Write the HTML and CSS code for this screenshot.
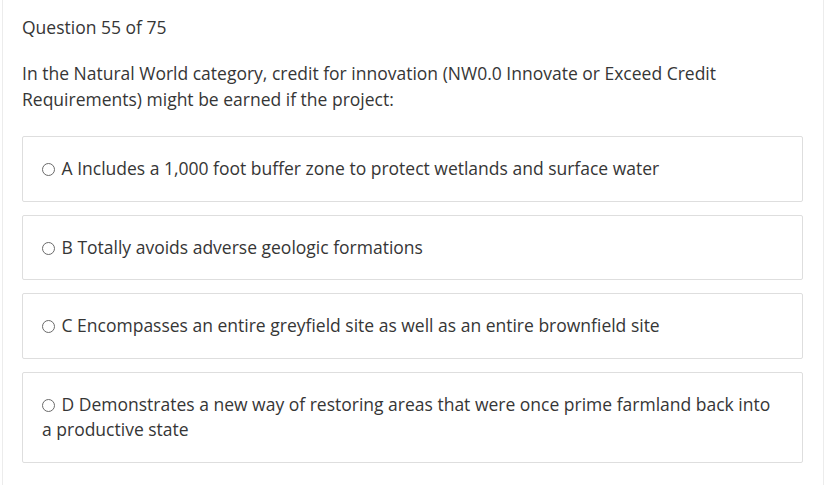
FILE: index.html
```html
<!DOCTYPE html>
<html>
<head>
<meta charset="utf-8">
<link rel="stylesheet" href="styles.css">
</head>
<body>
<div class="panel">
  <div class="qnum">Question 55 of 75</div>
  <p class="qtext">In the Natural World category, credit for innovation (NW0.0 Innovate or Exceed Credit Requirements) might be earned if the project:</p>
  <div class="options">
    <label class="option"><span class="radio"></span> A Includes a 1,000 foot buffer zone to protect wetlands and surface water</label>
    <label class="option"><span class="radio"></span> B Totally avoids adverse geologic formations</label>
    <label class="option"><span class="radio"></span> C Encompasses an entire greyfield site as well as an entire brownfield site</label>
    <label class="option"><span class="radio"></span> D Demonstrates a new way of restoring areas that were once prime farmland back into a productive state</label>
  </div>
</div>
</body>
</html>
```
FILE: styles.css
```css
html, body {
  margin: 0;
  padding: 0;
  background: #fff;
}
body {
  font-family: "Open Sans", "Liberation Sans", sans-serif;
  color: #363636;
  font-size: 17.5px;
  line-height: 1.5;
}
.panel {
  margin-left: 2px;
  width: 822px;
  border-left: 1px solid #ececec;
  border-right: 1px solid #ececec;
  padding: 14px 20px 40px 19px;
  box-sizing: border-box;
}
.qnum {
  line-height: 26px;
}
.qtext {
  margin: 20px 0 24px;
  line-height: 26px;
}
.options {
  display: flex;
  flex-direction: column;
  gap: 13px;
}
.option {
  display: block;
  border: 1px solid #dedede;
  border-radius: 2px;
  padding: 19px 19px;
  line-height: 25.5px;
}
.radio {
  display: inline-block;
  width: 11px;
  height: 11px;
  border: 1px solid #6a6a6a;
  border-radius: 50%;
  vertical-align: -1px;
  margin-right: 2px;
}
```
